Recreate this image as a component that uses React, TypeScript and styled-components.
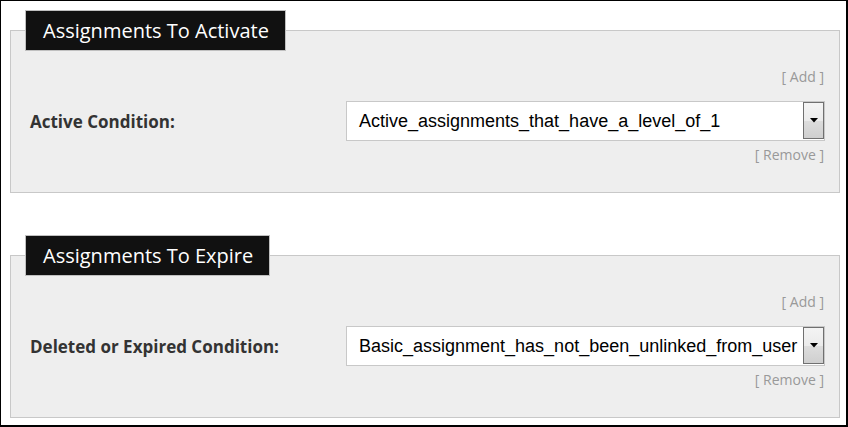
import React from 'react';
import styled, { createGlobalStyle } from 'styled-components';

const GlobalStyle = createGlobalStyle`
  html, body {
    margin: 0;
    padding: 0;
    background: #ffffff;
  }
  body {
    font-family: "Open Sans", "Noto Sans", sans-serif;
  }
`;

type Condition = {
  title: string;
  label: string;
  value: string;
};

const sections: Condition[] = [
  {
    title: 'Assignments To Activate',
    label: 'Active Condition:',
    value: 'Active_assignments_that_have_a_level_of_1',
  },
  {
    title: 'Assignments To Expire',
    label: 'Deleted or Expired Condition:',
    value: 'Basic_assignment_has_not_been_unlinked_from_user',
  },
];

const App = () => {
  return (
    <>
      <GlobalStyle />
      <Frame>
        {sections.map((section) => (
          <Panel key={section.title}>
            <Legend>{section.title}</Legend>
            <PanelBody>
              <ActionLink>[ Add ]</ActionLink>
              <ConditionRow>
                <ConditionLabel>{section.label}</ConditionLabel>
                <SelectBox>
                  <SelectValue>{section.value}</SelectValue>
                  <ArrowButton>
                    <svg width="8" height="5" viewBox="0 0 8 5">
                      <path d="M0 0 L8 0 L4 4.5 Z" fill="#000" />
                    </svg>
                  </ArrowButton>
                </SelectBox>
              </ConditionRow>
              <ActionLink $tight>[ Remove ]</ActionLink>
            </PanelBody>
          </Panel>
        ))}
      </Frame>
    </>
  );
};

const Frame = styled.div`
  box-sizing: border-box;
  width: 848px;
  height: 427px;
  border-style: solid;
  border-color: #000;
  border-width: 1px 2px 2px 1px;
  padding: 9px 6px 0 9px;
  display: flex;
  flex-direction: column;
  gap: 42px;
`;

const Panel = styled.fieldset`
  margin: 0;
  padding: 0 14px 0 19px;
  min-width: 0;
  border: 1px solid #c8c8c8;
  background: #eeeeee;
`;

const Legend = styled.legend`
  margin-left: -5px;
  padding: 0 16px 0 17px;
  height: 41px;
  box-sizing: border-box;
  background: #111111;
  border: 1px solid #c0c0c0;
  color: #ffffff;
  font-size: 20px;
  line-height: 39px;
  white-space: nowrap;
`;

const PanelBody = styled.div`
  display: flex;
  flex-direction: column;
  padding: 17px 0 28px;
`;

const ActionLink = styled.div<{ $tight?: boolean }>`
  align-self: flex-end;
  margin-top: ${(p) => (p.$tight ? '5px' : '0')};
  margin-bottom: ${(p) => (p.$tight ? '0' : '15px')};
  margin-right: 1px;
  color: #999999;
  font-size: 14px;
  line-height: 18px;
  cursor: pointer;
`;

const ConditionRow = styled.div`
  display: flex;
  align-items: center;
  justify-content: space-between;
`;

const ConditionLabel = styled.label`
  color: #333333;
  font-size: 17px;
  font-weight: 700;
`;

const SelectBox = styled.div`
  box-sizing: border-box;
  width: 479px;
  height: 40px;
  display: flex;
  align-items: stretch;
  background: #ffffff;
  border: 1px solid #c8c8c8;
`;

const SelectValue = styled.span`
  flex: 1;
  padding-left: 12px;
  font-family: "Liberation Sans", Arial, sans-serif;
  font-size: 18px;
  line-height: 38px;
  color: #000000;
  white-space: nowrap;
  overflow: hidden;
`;

const ArrowButton = styled.span`
  box-sizing: border-box;
  width: 21px;
  margin: 0 0 1px 0;
  display: flex;
  align-items: center;
  justify-content: center;
  border: 1px solid #707070;
  background: linear-gradient(to bottom, #f4f4f4 0%, #ebebeb 50%, #dddddd 51%, #cfcfcf 100%);
`;

export default App;
